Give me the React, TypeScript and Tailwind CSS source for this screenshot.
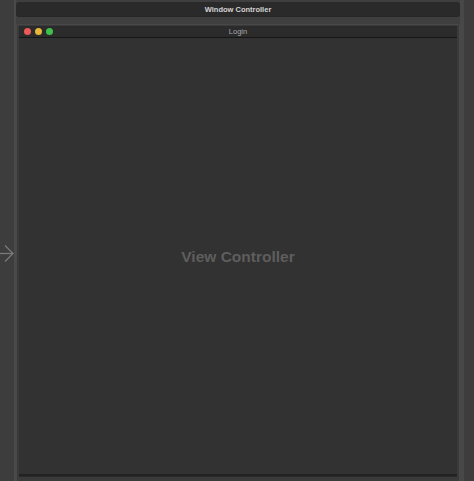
import React from "react";

export default function App() {
  return (
    <div
      className="w-[474px] h-[481px] bg-[#3d3d3d] flex overflow-hidden"
      style={{ fontFamily: "Helvetica, 'Liberation Sans', Arial, sans-serif" }}
    >
      {/* left gutter with segue arrow */}
      <div className="w-[14px] flex flex-col items-start pt-[244px]">
        <svg width="14" height="19" viewBox="0 0 14 19" fill="none">
          <path d="M0 9.5H13" stroke="#7a7a7a" strokeWidth="1.3" />
          <path d="M5 1.5L13 9.5L5 17.5" stroke="#7a7a7a" strokeWidth="1.3" />
        </svg>
      </div>

      {/* scene column */}
      <div className="w-[450px] h-full flex bg-[#474747]">
        <div className="w-[2px] h-full bg-[#4a4a4a]" />
        <div className="flex-1 flex flex-col bg-[#3f3f3f] pt-[2px]">
          {/* window controller bar */}
          <div className="h-[15px] rounded-[3px] bg-[#2a2a2a] border-b border-[#262626] flex items-center justify-center">
            <span className="text-[7.5px] font-bold text-[#d4d4d4] leading-none mt-[2px]">Window Controller</span>
          </div>

          {/* view controller panel */}
          <div className="mt-[7px] flex-1 bg-[#3a3a3a] border border-[#484848] border-b-0 rounded-t-[2px] px-[2px] pt-[1px] flex flex-col">
            <div className="flex-1 flex flex-col">
              {/* title bar */}
              <div className="h-[12px] bg-[#2b2b2b] border-b border-[#151515] relative flex items-center justify-center">
                <div className="absolute left-[5px] top-[2px] flex gap-[4px]">
                  <div className="w-[7px] h-[7px] rounded-full bg-[#ec5a57]" />
                  <div className="w-[7px] h-[7px] rounded-full bg-[#e6b83a]" />
                  <div className="w-[7px] h-[7px] rounded-full bg-[#3ec14d]" />
                </div>
                <span className="text-[7.5px] text-[#a8a8a8] leading-none">Login</span>
              </div>
              {/* content */}
              <div className="flex-1 bg-[#323232] flex items-center justify-center border-b-2 border-[#222222] mb-[5px] shadow-[0_1px_0_#2a2a2a]">
                <span className="text-[15.5px] font-bold text-[#5e5e5e] mt-[1px]">View Controller</span>
              </div>
            </div>
          </div>
        </div>
        <div className="w-[4px] h-full bg-[#484848]" />
      </div>

      <div className="flex-1 bg-[#3d3d3d]" />
    </div>
  );
}
